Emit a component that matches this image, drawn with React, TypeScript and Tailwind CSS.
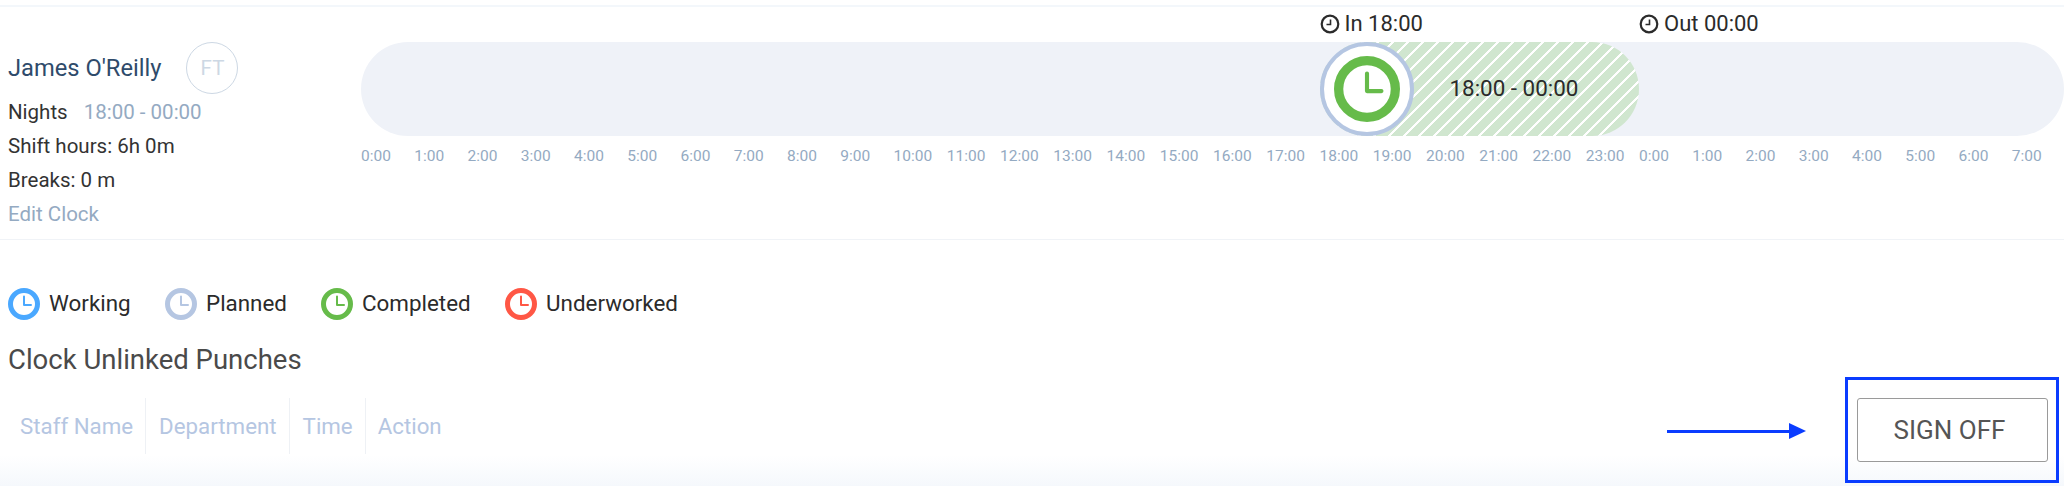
const ticks = [
  ...Array.from({ length: 24 }, (_, i) => `${i}:00`),
  ...Array.from({ length: 8 }, (_, i) => `${i}:00`),
]

const legend = [
  { label: 'Working', color: '#4aa8ff', box: 'w-[157px]' },
  { label: 'Planned', color: '#b5c6e2', box: 'w-[156px]' },
  { label: 'Completed', color: '#66bb4a', box: 'w-[184px]' },
  { label: 'Underworked', color: '#ff5745', box: 'w-[180px]' },
]

function ClockIcon({ color, size, stroke }: { color: string; size: number; stroke: number }) {
  return (
    <svg width={size} height={size} viewBox="0 0 32 32" fill="none" className="shrink-0">
      <circle cx="16" cy="16" r={16 - stroke / 2} stroke={color} strokeWidth={stroke} fill="#fff" />
      <path d="M16 8.5V17H23" stroke={color} strokeWidth="2" strokeLinecap="round" strokeLinejoin="round" />
    </svg>
  )
}

function SmallClock() {
  return (
    <svg width="20" height="20" viewBox="0 0 20 20" fill="none" className="shrink-0">
      <circle cx="10" cy="10" r="8.3" stroke="#2b2b2b" strokeWidth="2.2" />
      <path d="M10.5 5.5V10.5H6.5" stroke="#2b2b2b" strokeWidth="1.6" />
    </svg>
  )
}

export default function App() {
  return (
    <div className="relative h-[486px] w-[2064px] overflow-hidden bg-white font-['Roboto',sans-serif] text-[#333]">
      <div className="mt-[5px] h-[2px] bg-[#f3f7fb]" />

      {/* Shift row */}
      <div className="flex h-[233px] border-b border-[#f0f3f7]">
        <div className="w-[361px] shrink-0 pl-2 pt-[35px]">
          <div className="flex items-center">
            <span className="text-[23.7px] leading-[52px] text-[#2f4b6b]">James O'Reilly</span>
            <span className="ml-[25px] flex h-[52px] w-[52px] items-center justify-center rounded-full border border-[#cdd8e4] text-[20.5px] text-[#cdd8e4]">
              FT
            </span>
          </div>
          <div className="mt-[1px] text-[20.5px] leading-[34px]">
            <span>Nights</span>
            <span className="ml-[16px] text-[#94aac2]">18:00 - 00:00</span>
          </div>
          <div className="text-[20.5px] leading-[35px]">Shift hours: 6h 0m</div>
          <div className="text-[20.5px] leading-[33px]">Breaks: 0 m</div>
          <div className="text-[20.5px] leading-[34px] text-[#94aac2]">Edit Clock</div>
        </div>

        <div className="min-w-0 flex-1">
          <div className="grid h-[35px] grid-cols-[repeat(32,53.25px)] items-center pb-[2px] text-[22px] text-[#2b2b2b]">
            <div className="col-start-19 col-span-5 flex items-center gap-[5px] whitespace-nowrap">
              <SmallClock />
              In 18:00
            </div>
            <div className="col-start-25 col-span-5 flex items-center gap-[5px] whitespace-nowrap">
              <SmallClock />
              Out 00:00
            </div>
          </div>

          <div className="grid h-[94px] grid-cols-[repeat(32,53.25px)] rounded-l-[47px] rounded-r-[47px] bg-[#eff2f8]">
            <div className="col-start-19 col-span-6 flex items-center rounded-[47px] bg-[repeating-linear-gradient(135deg,#d0e6cf_0,#d0e6cf_8px,#ffffff_8px,#ffffff_10.6px)]">
              <div className="flex h-[94px] w-[94px] shrink-0 items-center justify-center rounded-full border-[4px] border-[#b5c6e2] bg-white">
                <ClockIcon color="#66bb4a" size={66} stroke={4.5} />
              </div>
              <span className="ml-[36px] whitespace-nowrap text-[22.4px] text-[#2b2b2b]">18:00 - 00:00</span>
            </div>
          </div>

          <div className="mt-[10px] grid grid-cols-[repeat(32,53.25px)] text-[15.5px] leading-[20px] text-[#94aac2]">
            {ticks.map((t, i) => (
              <span key={i}>{t}</span>
            ))}
          </div>
        </div>
      </div>

      {/* Legend */}
      <div className="mt-[47px] flex h-[33px] items-center pl-2">
        {legend.map(l => (
          <div key={l.label} className={`flex items-center gap-[9px] ${l.box}`}>
            <ClockIcon color={l.color} size={32} stroke={5} />
            <span className="text-[22.4px] text-[#2b2b2b]">{l.label}</span>
          </div>
        ))}
      </div>

      <h2 className="mt-[23px] pl-2 text-[27.5px] leading-[34px] font-normal text-[#4a4a4a]">Clock Unlinked Punches</h2>

      {/* Table header and sign off */}
      <div className="flex">
        <div className="mt-[21px] ml-[6px] flex h-[56px] items-center text-[22.3px] text-[#b5c6e2]">
          <span className="flex h-full items-center border-r border-[#eef1f5] pt-[2px] pr-[12px] pl-[14px]">Staff Name</span>
          <span className="flex h-full items-center border-r border-[#eef1f5] pt-[2px] pr-[12px] pl-[13px]">Department</span>
          <span className="flex h-full items-center border-r border-[#eef1f5] pt-[2px] pr-[12px] pl-[13px]">Time</span>
          <span className="flex h-full items-center pt-[2px] pl-[12px]">Action</span>
        </div>
      </div>

      <div className="absolute inset-x-0 bottom-0 h-[31px] bg-gradient-to-b from-white to-[#f5f8fc]" />

      {/* Annotation over the page */}
      <div className="absolute top-[423px] left-[1667px] flex items-center">
        <div className="h-[3px] w-[122px] bg-[#0a3cff]" />
        <div className="h-0 w-0 border-y-[8.5px] border-l-[17px] border-y-transparent border-l-[#0a3cff]" />
      </div>
      <div className="absolute top-[377px] left-[1845px] flex h-[106px] w-[214px] items-center justify-center border-[3px] border-[#0a3cff]">
        <button className="h-[64px] w-[191px] rounded-[3px] border border-[#9a9a9a] bg-white pr-[5px] text-[26px] text-[#555]">
          SIGN OFF
        </button>
      </div>
    </div>
  )
}
